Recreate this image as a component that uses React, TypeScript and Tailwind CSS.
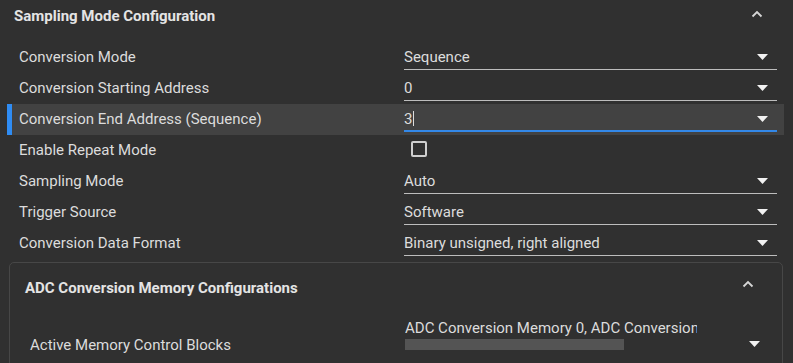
import React from "react";

type Row = { label: string; value?: string; kind?: "select" | "check"; active?: boolean };

const rows: Row[] = [
  { label: "Conversion Mode", value: "Sequence" },
  { label: "Conversion Starting Address", value: "0" },
  { label: "Conversion End Address (Sequence)", value: "3", active: true },
  { label: "Enable Repeat Mode", kind: "check" },
  { label: "Sampling Mode", value: "Auto" },
  { label: "Trigger Source", value: "Software" },
  { label: "Conversion Data Format", value: "Binary unsigned, right aligned" },
];

function Caret() {
  return (
    <svg width="11" height="6" viewBox="0 0 11 6" className="shrink-0">
      <path d="M0 0h11L5.5 6z" fill="#f2f2f2" />
    </svg>
  );
}

function ChevronUp() {
  return (
    <svg width="12" height="8" viewBox="0 0 12 8">
      <path d="M1.5 6.5 6 2l4.5 4.5" fill="none" stroke="#d6d6d6" strokeWidth="1.8" />
    </svg>
  );
}

function FieldRow({ row }: { row: Row }) {
  return (
    <div
      className={`relative grid h-[31px] grid-cols-[397px_1fr] items-center pr-[7px] ${
        row.active ? "bg-[#424242]" : ""
      }`}
    >
      {row.active && <div className="absolute left-0 top-0 h-full w-[5px] bg-[#2f8cf3]" />}
      <span className="self-start pl-3 pt-[6px] text-[15px] leading-[18px] text-[#dcdcdc]">{row.label}</span>
      {row.kind === "check" ? (
        <div className="mb-[3px] ml-[7px] h-[16px] w-[16px] rounded-[2px] border-2 border-[#cfcfcf]" />
      ) : (
        <div
          className={`flex h-[28px] items-center justify-between self-start pr-[9px] pt-[3px] ${
            row.active ? "border-b-2 border-[#3388e8]" : "border-b border-[#bdbdbd]"
          }`}
        >
          <span className="text-[15px] leading-[18px] text-[#dcdcdc]">
            {row.value}
            {row.active && <span className="ml-[1px] inline-block h-[15px] w-px translate-y-[2px] bg-[#dcdcdc]" />}
          </span>
          <Caret />
        </div>
      )}
    </div>
  );
}

export default function App() {
  return (
    <div className="h-[363px] w-[793px] overflow-hidden bg-[#303030] font-['Roboto',sans-serif]">
      <div className="flex h-[32px] items-center justify-between pl-[14px] pr-[30px]">
        <span className="text-[15px] font-bold leading-[18px] text-[#e4e4e4]">Sampling Mode Configuration</span>
        <div className="mb-[5px]">
          <ChevronUp />
        </div>
      </div>
      <div className="mt-[10px] pl-[7px] pr-[9px]">
        {rows.map((r) => (
          <FieldRow key={r.label} row={r} />
        ))}
      </div>
      <div className="ml-[9px] mr-[10px] mt-[3px] h-[120px] rounded-[5px] border border-[#474747]">
        <div className="flex items-center justify-between pl-[15px] pr-[28px] pt-[16px]">
          <span className="text-[15px] font-bold leading-[18px] text-[#e4e4e4]">ADC Conversion Memory Configurations</span>
          <div className="mb-[8px]">
            <ChevronUp />
          </div>
        </div>
        <div className="mt-[22px] grid grid-cols-[375px_1fr] items-start pl-[20px] pr-[20px]">
          <span className="pt-[17px] text-[15px] leading-[18px] text-[#dcdcdc]">Active Memory Control Blocks</span>
          <div className="flex items-end justify-between">
            <div className="flex flex-col">
              <span className="w-[292px] overflow-hidden whitespace-nowrap text-[15px] leading-[18px] text-[#dcdcdc]">
                ADC Conversion Memory 0, ADC Conversion Memory 1
              </span>
              <div className="mt-[2px] h-[11px] w-[219px] bg-[#545454]" />
            </div>
            <div className="mb-[3px] mr-[2px]">
              <Caret />
            </div>
          </div>
        </div>
      </div>
    </div>
  );
}
